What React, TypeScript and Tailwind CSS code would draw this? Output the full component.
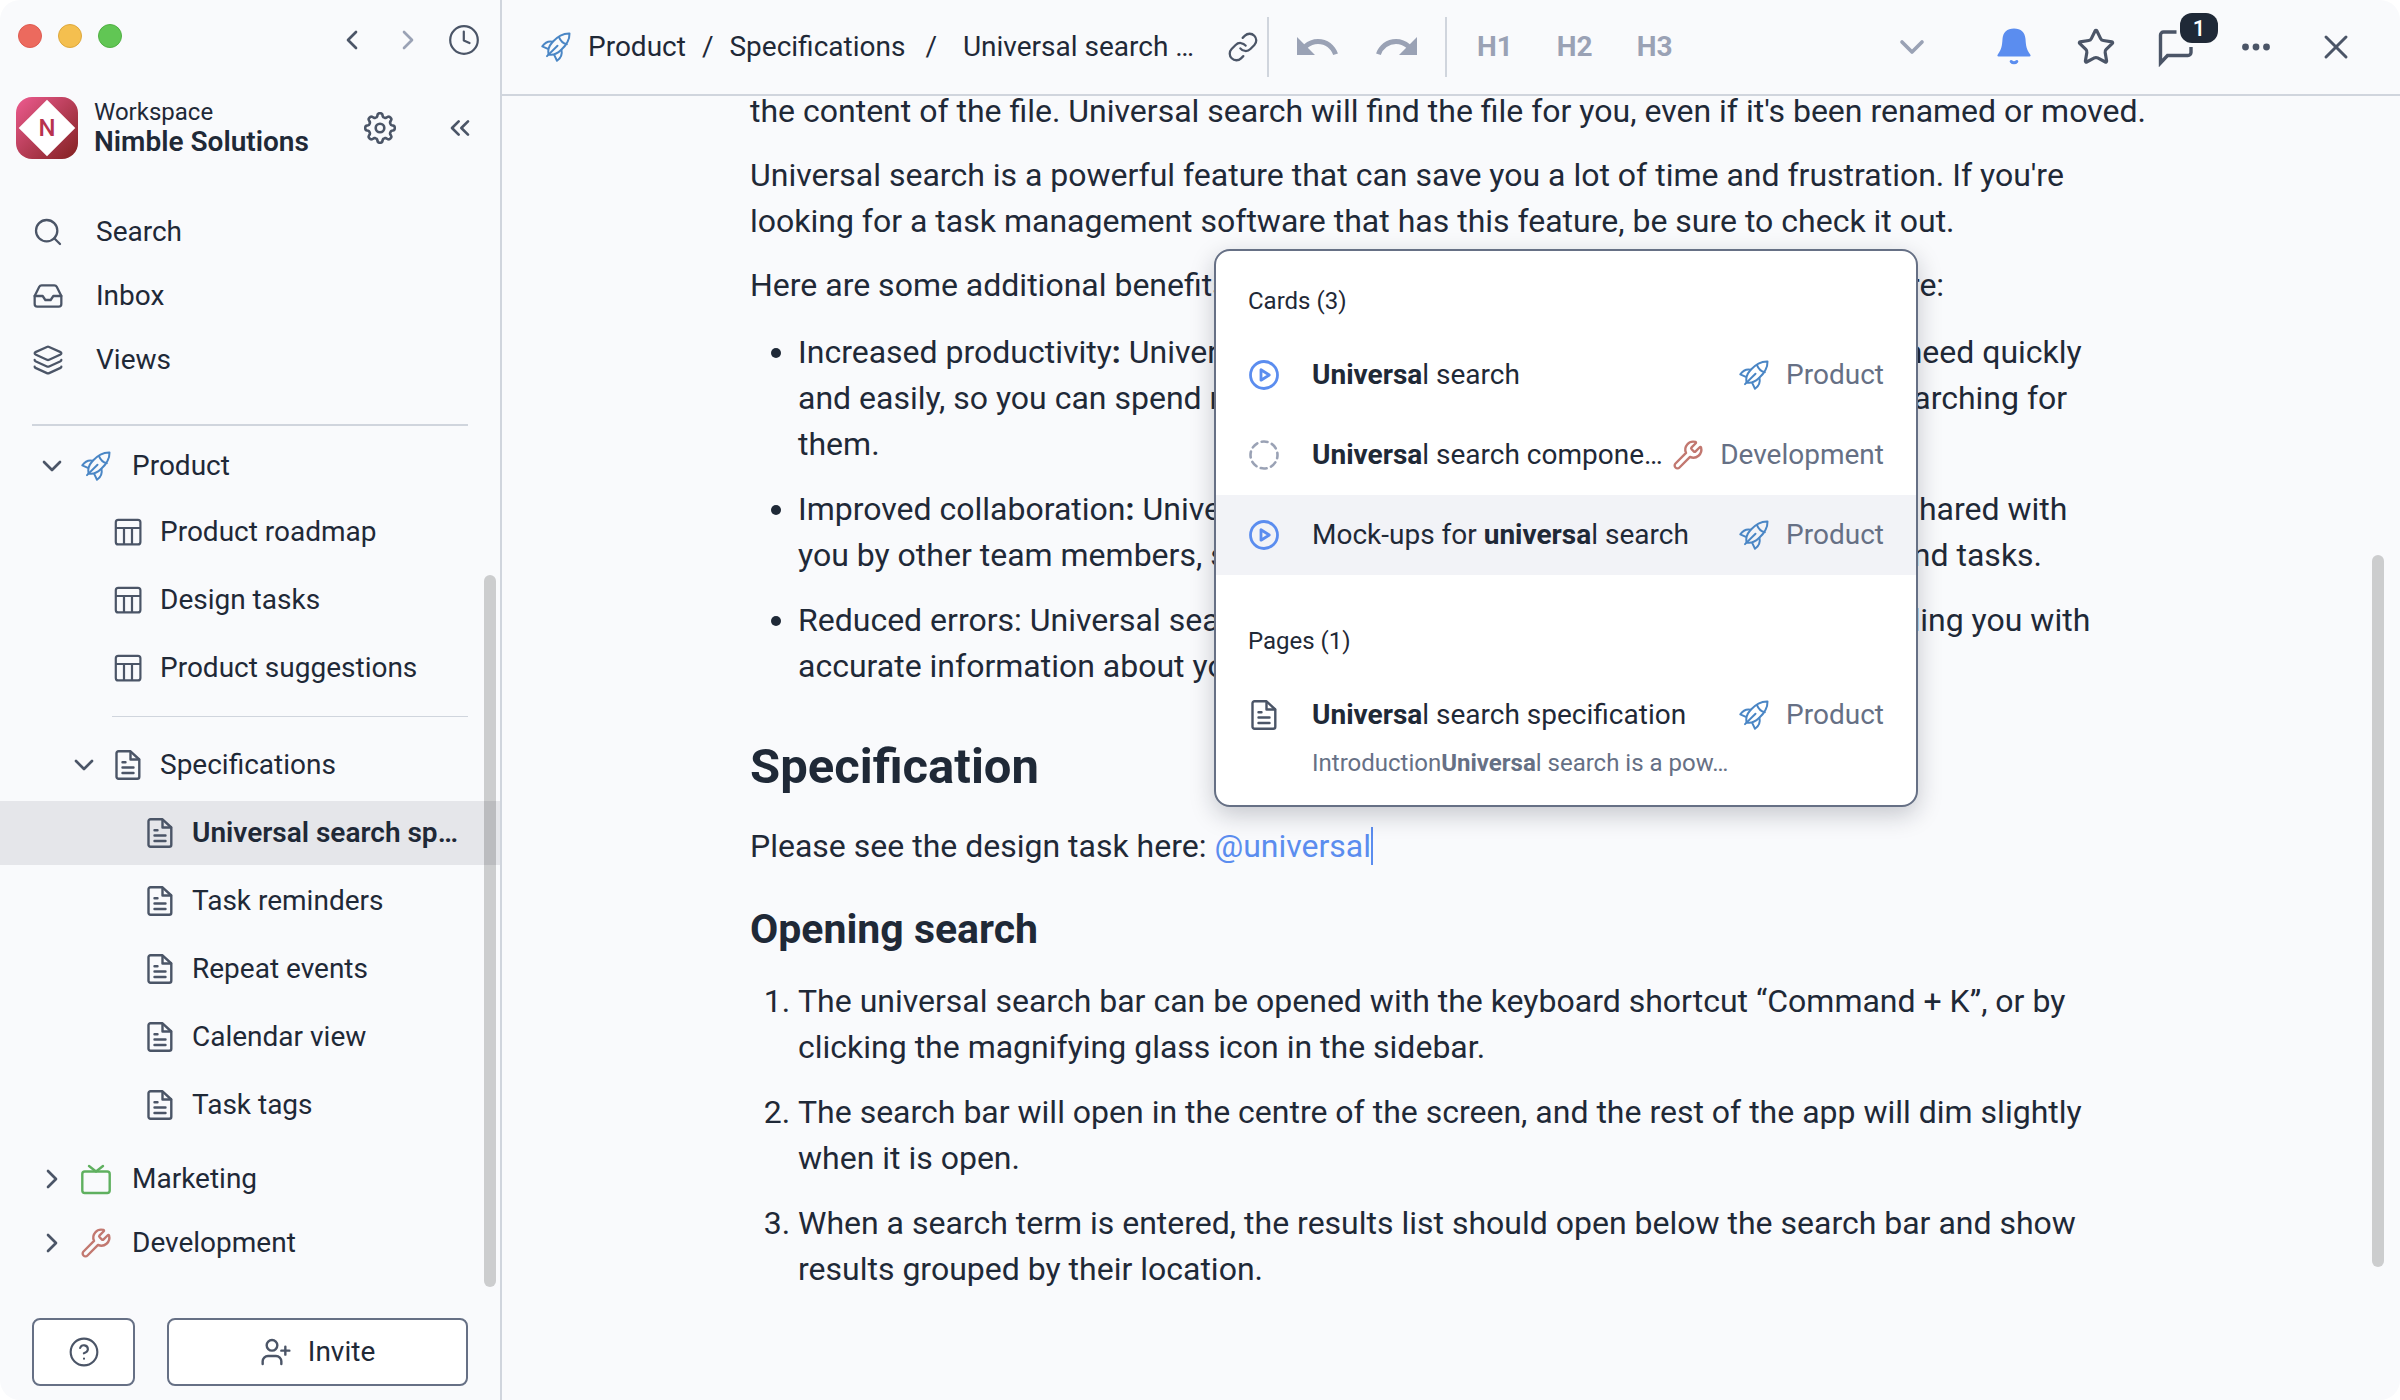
import React, { useState } from 'react';
import {
  ChevronDown,
  ChevronLeft,
  ChevronRight,
  ChevronsLeft,
  CircleQuestionMark,
  Inbox,
  Layers,
  Link,
  Search,
  Star,
  UserPlus,
  Wrench,
  X,
} from 'lucide-react';
import { MdRedo, MdUndo } from 'react-icons/md';

interface IconProps {
  className?: string;
}

const RocketIcon: React.FC<IconProps> = ({ className = 'size-8' }) => (
  <svg viewBox="-1.5 -1.5 32 32" fill="none" stroke="#4a86c5" strokeWidth="2" strokeLinecap="round" strokeLinejoin="round" className={`shrink-0 ${className}`}>
    <path d="M28 1C21 .8 15.500 4.500 11 9.500C7.500 13.500 6 17.500 7 22C11.500 23 16 21 19.500 17.500C24.500 13 28.200 8 28 1Z" />
    <path d="M17.500 4.600C19 8.500 22 11 25.300 11.700" />
    <path d="M11 9.200C6.500 8.200 3.500 10 .8 13.900L6.400 16.300" />
    <path d="M20 17.600C21 22 19.300 25.500 15.500 28.300L12.800 22.600" />
    <path d="M16 13.200L5.500 23.600" />
  </svg>
);

const PageIcon: React.FC<IconProps> = ({ className = 'size-8' }) => (
  <svg viewBox="0 0 32 32" fill="none" stroke="currentColor" strokeWidth="2.4" strokeLinecap="round" strokeLinejoin="round" className={`shrink-0 ${className}`}>
    <path d="M6.500 2.300H18.500L27.300 10.500V27.700a2 2 0 0 1-2 2H6.500a2 2 0 0 1-2-2V4.300a2 2 0 0 1 2-2Z" />
    <path d="M18.500 3V10.500H27" />
    <path d="M10.500 13.200h3M10.500 18.500h11M10.500 24h11" />
  </svg>
);

const TableIcon: React.FC<IconProps> = ({ className = 'size-8' }) => (
  <svg viewBox="0 0 32 32" fill="none" stroke="currentColor" strokeWidth="2.2" className={`shrink-0 ${className}`}>
    <rect x="3.800" y="3.800" width="24.600" height="24.600" rx="2.500" />
    <path d="M3.500 12h25M12 12v16.500M20 12v16.500" />
  </svg>
);

const TvIcon: React.FC<IconProps> = ({ className = 'size-8' }) => (
  <svg viewBox="0 0 32 32" fill="none" stroke="#5fb05f" strokeWidth="2.4" strokeLinecap="round" strokeLinejoin="round" className={`shrink-0 ${className}`}>
    <rect x="2.300" y="8.500" width="27.400" height="21.500" rx="2.500" />
    <path d="M9 3l7 5.500L23 3" />
  </svg>
);

const ClockIcon: React.FC<IconProps> = ({ className = 'size-8' }) => (
  <svg viewBox="0 0 32 32" fill="none" stroke="currentColor" strokeWidth="2.2" strokeLinecap="round" strokeLinejoin="round" className={`shrink-0 ${className}`}>
    <circle cx="16" cy="16" r="13.800" />
    <path d="M15.800 7.500V16.500L21.500 19" />
  </svg>
);

// Eight rounded teeth around the hub
const gearPoints = Array.from({ length: 160 }, (_, i) => {
  const a = (i / 160) * Math.PI * 2;
  const r = 13 + 1.8 * Math.tanh(2 * Math.cos(8 * a));
  return `${(16 + r * Math.sin(a)).toFixed(2)} ${(16 - r * Math.cos(a)).toFixed(2)}`;
});

const GearIcon: React.FC<IconProps> = ({ className = 'size-8' }) => (
  <svg viewBox="0 0 32 32" fill="none" stroke="currentColor" strokeWidth="2.600" strokeLinejoin="round" className={`shrink-0 ${className}`}>
    <path d={`M${gearPoints.join('L')}Z`} />
    <circle cx="16" cy="16" r="4.300" />
  </svg>
);

const BellIcon: React.FC<IconProps> = ({ className = 'size-10' }) => (
  <svg viewBox="0 0 40 40" fill="#5b8def" className={`shrink-0 ${className}`}>
    <path d="M20 1.500C27 1.500 31 5.500 31.500 12C32 19 32.300 22 36.200 27.500C37 28.800 36.500 29.500 35.500 29.500H4.500C3.500 29.500 3 28.800 3.800 27.500C7.700 22 8 19 8.500 12C9 5.500 13 1.500 20 1.500Z" />
    <path d="M17.200 34.500a3.600 3.600 0 0 0 5.600 0" fill="none" stroke="#5b8def" strokeWidth="3" strokeLinecap="round" />
  </svg>
);

const CommentIcon: React.FC<IconProps> = ({ className = 'size-10' }) => (
  <svg viewBox="0 0 40 40" fill="none" stroke="currentColor" strokeWidth="3.400" className={`shrink-0 ${className}`}>
    <path d="M20.500 5H7.500a3 3 0 0 0-3 3V36L11.500 28.500H32a3 3 0 0 0 3-3V20" />
  </svg>
);

const PlayIcon: React.FC<IconProps> = ({ className = 'size-8' }) => (
  <svg viewBox="0 0 32 32" fill="none" stroke="#5b8def" strokeWidth="2.800" strokeLinejoin="round" className={`shrink-0 ${className}`}>
    <circle cx="16" cy="16" r="13.500" />
    <path d="M13 10.800v10.400l8.300-5.200Z" />
  </svg>
);

const DashedIcon: React.FC<IconProps> = ({ className = 'size-8' }) => (
  <svg viewBox="0 0 32 32" fill="none" stroke="#9aa2b5" strokeWidth="2.600" strokeLinecap="round" className={`shrink-0 ${className}`}>
    <circle cx="16" cy="16" r="13.500" strokeDasharray="6 4.600" strokeDashoffset="2.800" />
  </svg>
);

interface TreeRowProps {
  label: string;
  icon: React.ReactNode;
}

const TableRow: React.FC<TreeRowProps> = ({ label, icon }) => (
  <a href="#" className="flex h-[68px] items-center gap-4 pl-28 pr-9">
    {icon}
    <span className="truncate">{label}</span>
  </a>
);

interface PageRowProps {
  label: string;
  active: boolean;
  onSelect: () => void;
}

const PageRow: React.FC<PageRowProps> = ({ label, active, onSelect }) => (
  <button
    type="button"
    onClick={onSelect}
    className={
      active
        ? 'my-0.5 flex h-16 w-full items-center gap-4 bg-[#e5e6ea] pl-36 pr-9 text-left font-semibold'
        : 'flex h-[68px] w-full items-center gap-4 pl-36 pr-9 text-left'
    }
  >
    <PageIcon className="size-8 text-[#4b5567]" />
    <span className="truncate">{label}</span>
  </button>
);

const pages = ['Universal search specification', 'Task reminders', 'Repeat events', 'Calendar view', 'Task tags'];

const Sidebar: React.FC = () => {
  const [activePage, setActivePage] = useState<string>(pages[0]);

  return (
    <aside className="flex w-[502px] shrink-0 flex-col border-r-2 border-[#d0d5dd] text-[28px] leading-8">
      <div className="flex h-20 shrink-0 items-center pl-[18px] pr-5">
        <div className="flex gap-4 pb-2">
          <span className="size-6 rounded-full border border-[#df5a50] bg-[#ec6a5e]" />
          <span className="size-6 rounded-full border border-[#dea83c] bg-[#f4bf4f]" />
          <span className="size-6 rounded-full border border-[#50b043] bg-[#61c654]" />
        </div>
        <div className="ml-auto flex items-center gap-6 text-[#4b5567]">
          <button type="button" aria-label="Back">
            <ChevronLeft className="size-8" strokeWidth={2} />
          </button>
          <button type="button" aria-label="Forward" className="text-[#9aa2b5]">
            <ChevronRight className="size-8" strokeWidth={2} />
          </button>
          <button type="button" aria-label="History">
            <ClockIcon className="size-8" />
          </button>
        </div>
      </div>

      {/* Workspace */}
      <div className="flex h-24 shrink-0 items-center pl-4 pr-6">
        <div className="grid size-[62px] place-items-center rounded-2xl bg-linear-to-br from-[#ee5b90] to-[#83201f]">
          <div className="col-start-1 row-start-1 size-10 rotate-45 bg-white" />
          <span className="z-10 col-start-1 row-start-1 text-2xl font-medium text-[#b8324f]">N</span>
        </div>
        <div className="ml-4">
          <div className="text-2xl leading-7">Workspace</div>
          <div className="leading-8 font-semibold">Nimble Solutions</div>
        </div>
        <div className="ml-auto flex items-center gap-12 text-[#4b5567]">
          <button type="button" aria-label="Settings">
            <GearIcon className="size-8" />
          </button>
          <button type="button" aria-label="Collapse sidebar">
            <ChevronsLeft className="size-8" strokeWidth={2} />
          </button>
        </div>
      </div>

      <nav className="mt-6 flex shrink-0 flex-col">
        <a href="#" className="flex h-16 items-center gap-8 pl-8">
          <Search className="size-8 text-[#4b5567]" strokeWidth={1.7} />
          Search
        </a>
        <a href="#" className="flex h-16 items-center gap-8 pl-8">
          <Inbox className="size-8 text-[#4b5567]" strokeWidth={1.7} />
          Inbox
        </a>
        <a href="#" className="flex h-16 items-center gap-8 pl-8">
          <Layers className="size-8 text-[#4b5567]" strokeWidth={1.7} />
          Views
        </a>
      </nav>

      {/* Tree */}
      <div className="relative mt-8 min-h-0 flex-1 overflow-hidden">
        <hr className="ml-8 mr-8 border-t-2 border-[#d0d5dd]" />
        <button type="button" className="mt-2 flex h-16 w-full items-center pl-9">
          <ChevronDown className="size-8 text-[#4b5567]" strokeWidth={2} />
          <RocketIcon className="ml-3 size-8" />
          <span className="ml-5">Product</span>
        </button>
        <TableRow label="Product roadmap" icon={<TableIcon className="size-8 text-[#4b5567]" />} />
        <TableRow label="Design tasks" icon={<TableIcon className="size-8 text-[#4b5567]" />} />
        <TableRow label="Product suggestions" icon={<TableIcon className="size-8 text-[#4b5567]" />} />
        <hr className="my-3.5 ml-28 mr-8 border-[#d0d5dd]" />
        <button type="button" className="flex h-[68px] w-full items-center pl-[68px]">
          <ChevronDown className="size-8 text-[#4b5567]" strokeWidth={2} />
          <PageIcon className="ml-3 size-8 text-[#4b5567]" />
          <span className="ml-4">Specifications</span>
        </button>
        {pages.map(page => (
          <PageRow key={page} label={page} active={page === activePage} onSelect={() => setActivePage(page)} />
        ))}
        <button type="button" className="mt-2 flex h-16 w-full items-center pl-9">
          <ChevronRight className="size-8 text-[#4b5567]" strokeWidth={2} />
          <TvIcon className="ml-3 size-8" />
          <span className="ml-5">Marketing</span>
        </button>
        <button type="button" className="flex h-16 w-full items-center pl-9">
          <ChevronRight className="size-8 text-[#4b5567]" strokeWidth={2} />
          <Wrench className="ml-3 size-8 text-[#c27870]" strokeWidth={1.8} />
          <span className="ml-5">Development</span>
        </button>
        <div className="absolute top-[151px] right-1 h-[712px] w-3 rounded-full bg-black/18" />
      </div>

      <div className="flex shrink-0 gap-8 px-8 pb-3.5">
        <button type="button" aria-label="Help" className="flex h-[68px] w-[103px] items-center justify-center rounded-lg border-2 border-[#667085] bg-white text-[#4b5567]">
          <CircleQuestionMark className="size-8" strokeWidth={1.6} />
        </button>
        <button type="button" className="flex h-[68px] flex-1 items-center justify-center gap-4 rounded-lg border-2 border-[#667085] bg-white">
          <UserPlus className="size-8 text-[#4b5567]" strokeWidth={1.8} />
          Invite
        </button>
      </div>
    </aside>
  );
};

const Toolbar: React.FC = () => (
  <header className="flex h-24 shrink-0 items-center border-b-2 border-[#d0d5dd] pl-[38px] pr-11 text-[28px] text-[#4b5567]">
    <div className="flex items-center text-[#1f2937]">
      <RocketIcon className="size-8" />
      <a href="#" className="ml-4">Product</a>
      <span className="mx-4">/</span>
      <a href="#">Specifications</a>
      <span className="mr-[26px] ml-5">/</span>
      <span className="w-[232px] truncate">Universal search specification</span>
    </div>
    <button type="button" aria-label="Copy link" className="ml-8">
      <Link className="size-8" strokeWidth={1.7} />
    </button>
    <div className="mx-2 h-[60px] w-0.5 bg-[#d0d5dd]" />
    <div className="flex items-center gap-8 px-4 text-[#9aa2b5]">
      <button type="button" aria-label="Undo">
        <MdUndo className="size-12" />
      </button>
      <button type="button" aria-label="Redo">
        <MdRedo className="size-12" />
      </button>
    </div>
    <div className="mx-2 h-[60px] w-0.5 bg-[#d0d5dd]" />
    <div className="flex items-center gap-11 pl-[22px] font-bold text-[#9aa2b5]">
      <button type="button">H1</button>
      <button type="button">H2</button>
      <button type="button">H3</button>
    </div>
    <button type="button" aria-label="More formatting" className="ml-auto text-[#9aa2b5]">
      <ChevronDown className="size-10" strokeWidth={2.2} />
    </button>
    <button type="button" aria-label="Notifications" className="ml-[62px]">
      <BellIcon className="size-10" />
    </button>
    <div className="ml-[42px] flex items-center gap-10">
      <button type="button" aria-label="Favourite">
        <Star className="size-10" strokeWidth={1.9} />
      </button>
      <button type="button" aria-label="Comments" className="relative">
        <CommentIcon className="size-10" />
        <span className="absolute -top-3.5 left-6 flex h-[30px] w-[38px] items-center justify-center rounded-xl bg-[#1f2937] text-[22px] font-medium text-white">
          1
        </span>
      </button>
      <button type="button" aria-label="More">
        <svg viewBox="0 0 40 40" fill="currentColor" className="size-10">
          <circle cx="9.500" cy="20" r="3.400" />
          <circle cx="20" cy="20" r="3.400" />
          <circle cx="30.500" cy="20" r="3.400" />
        </svg>
      </button>
      <button type="button" aria-label="Close">
        <X className="size-10" strokeWidth={1.8} />
      </button>
    </div>
  </header>
);

interface ResultProps {
  icon: React.ReactNode;
  title: React.ReactNode;
  project: string;
  projectIcon: React.ReactNode;
  highlighted?: boolean;
}

const Result: React.FC<ResultProps> = ({ icon, title, project, projectIcon, highlighted }) => (
  <button
    type="button"
    className={
      highlighted
        ? 'flex h-20 w-full items-center bg-[#f2f3f7] px-8 text-left'
        : 'flex h-20 w-full items-center px-8 text-left'
    }
  >
    {icon}
    <span className="ml-8 min-w-0 flex-1 truncate">{title}</span>
    <span className="flex items-center gap-4 text-[#667085]">
      {projectIcon}
      {project}
    </span>
  </button>
);

const SearchPopup: React.FC = () => (
  <div className="absolute bottom-full left-[464px] mb-4 w-[704px] rounded-2xl border-2 border-[#667085] bg-white pt-[34px] pb-[26px] text-[28px] leading-8 text-[#1f2937] shadow-[0_8px_24px_rgba(16,24,40,0.22)]">
    <div className="mb-[18px] px-8 text-2xl">Cards (3)</div>
    <Result
      icon={<PlayIcon />}
      title={<><b>Universa</b>l search</>}
      project="Product"
      projectIcon={<RocketIcon />}
    />
    <Result
      icon={<DashedIcon />}
      title={<><b>Universa</b>l search components</>}
      project="Development"
      projectIcon={<Wrench className="size-8 text-[#c27870]" strokeWidth={1.8} />}
    />
    <Result
      icon={<PlayIcon />}
      title={<>Mock-ups for <b>universa</b>l search</>}
      project="Product"
      projectIcon={<RocketIcon />}
      highlighted
    />
    <div className="mt-[50px] mb-[18px] px-8 text-2xl">Pages (1)</div>
    <Result
      icon={<PageIcon className="size-8 text-[#4b5567]" />}
      title={<><b>Universa</b>l search specification</>}
      project="Product"
      projectIcon={<RocketIcon />}
    />
    <div className="-mt-2 pl-24 text-2xl text-[#667085]">
      Introduction<b>Universa</b>l search is a pow…
    </div>
  </div>
);

const Document: React.FC = () => (
  <main className="relative min-h-0 flex-1 overflow-hidden">
    <article className="mx-auto -mt-2 w-[1402px] max-w-full text-[32px] leading-[46px]">
      <p>the content of the file. Universal search will find the file for you, even if it's been renamed or moved.</p>
      <p className="mt-[18px]">
        Universal search is a powerful feature that can save you a lot of time and frustration. If you're
        <br />
        looking for a task management software that has this feature, be sure to check it out.
      </p>
      <p className="mt-[18px]">Here are some additional benefits of universal search and project planning software:</p>
      <ul className="mt-[21px] flex list-disc flex-col gap-[19px] pl-12">
        <li>
          Increased productivity<b>:</b> Universal search can help you find the information you need quickly
          <br />
          and easily, so you can spend more time working on your tasks and less time searching for
          <br />
          them.
        </li>
        <li>
          Improved collaboration<b>:</b> Universal search makes it easy to get all files that are shared with
          <br />
          you by other team members, so you can collaborate more effectively on work and tasks.
        </li>
        <li>
          Reduced errors: Universal search can help you reduce errors and slips by providing you with
          <br />
          accurate information about your tasks.
        </li>
      </ul>
      <h2 className="mt-12 text-[49px] leading-[60px] font-bold">Specification</h2>
      <div className="relative mt-[26px]">
        <p className="flex items-center">
          <span>Please see the design task here: <a href="#" className="text-[#5b8def]">@universal</a></span>
          <span className="h-[38px] w-0.5 bg-[#5b8def]" />
        </p>
        <SearchPopup />
      </div>
      <h3 className="mt-9 text-[41px] leading-[48px] font-bold">Opening search</h3>
      <ol className="mt-[25px] flex list-decimal flex-col gap-[19px] pl-12">
        <li>
          The universal search bar can be opened with the keyboard shortcut “Command + K”, or by
          <br />
          clicking the magnifying glass icon in the sidebar.
        </li>
        <li>
          The search bar will open in the centre of the screen, and the rest of the app will dim slightly
          <br />
          when it is open.
        </li>
        <li>
          When a search term is entered, the results list should open below the search bar and show
          <br />
          results grouped by their location.
        </li>
      </ol>
    </article>
    <div className="absolute top-[459px] right-4 h-[712px] w-3 rounded-full bg-black/18" />
  </main>
);

const App: React.FC = () => {
  return (
    <div className="flex h-screen overflow-hidden rounded-[20px] bg-[#f9fafc] font-[Roboto,sans-serif] text-[#1f2937]">
      <Sidebar />
      <div className="flex min-w-0 flex-1 flex-col">
        <Toolbar />
        <Document />
      </div>
    </div>
  );
};

export default App;
